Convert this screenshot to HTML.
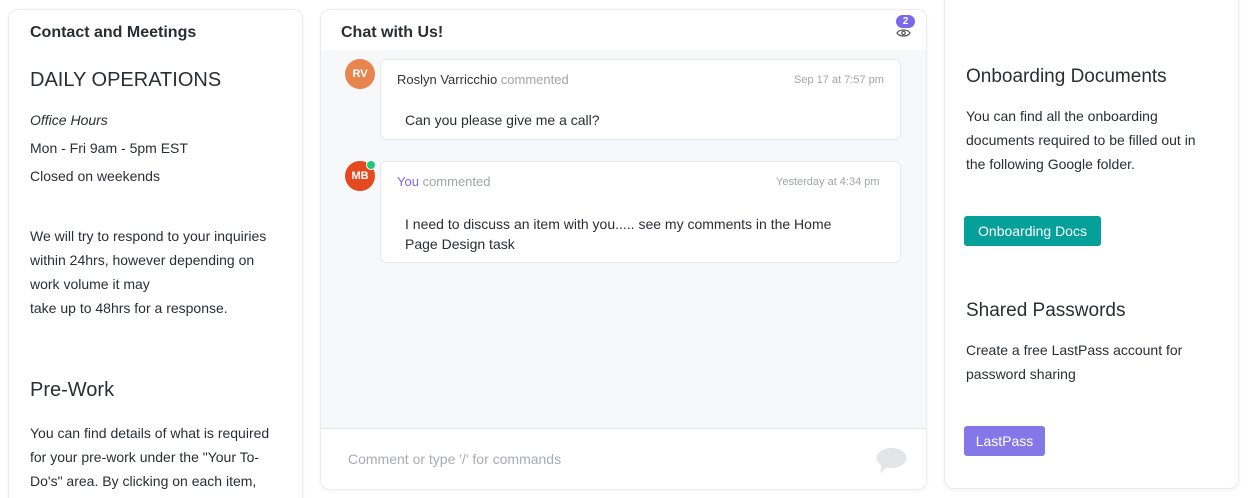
<!DOCTYPE html>
<html><head><meta charset="utf-8"><style>
*{box-sizing:border-box;margin:0;padding:0}
html,body{width:1249px;height:498px;overflow:hidden}
body{background:#fff;font-family:"Liberation Sans",sans-serif;color:#2a2e34;position:relative}
.card{position:absolute;background:#fff;border:1px solid #ececee;border-radius:10px;box-shadow:0 1px 4px rgba(0,0,0,.06)}
.a{position:absolute;white-space:nowrap}
.t{font-size:14px;color:#2a2e34}
.btn{position:absolute;color:#fff;font-size:14px;border-radius:3px;text-align:center;line-height:30px}
</style></head><body>
<div class="card" style="left:8px;top:9px;width:295px;height:500px;border-bottom:none;border-radius:10px 10px 0 0"></div>
<div class="a" style="left:30px;top:24px;font-size:16px;font-weight:bold;color:#2a2e34">Contact and Meetings</div>
<div class="a" style="left:30px;top:69px;font-size:20px">DAILY OPERATIONS</div>
<div class="a t" style="left:30px;top:112px;font-style:italic">Office Hours</div>
<div class="a t" style="left:30px;top:140px">Mon - Fri 9am - 5pm EST</div>
<div class="a t" style="left:30px;top:168px">Closed on weekends</div>
<div class="a t" style="left:30px;top:224px;line-height:24px">We will try to respond to your inquiries<br>within 24hrs, however depending on<br>work volume it may</div>
<div class="a t" style="left:30px;top:300px">take up to 48hrs for a response.</div>
<div class="a" style="left:30px;top:379px;font-size:20px">Pre-Work</div>
<div class="a t" style="left:30px;top:421px;line-height:24px">You can find details of what is required<br>for your pre-work under the "Your To-<br>Do's" area. By clicking on each item,<br>you will be taken to the task where</div>

<div class="card" style="left:320px;top:9px;width:607px;height:481px;overflow:hidden">
 <div style="position:absolute;left:0;top:40px;width:607px;height:379px;background:#f7f8fa;border-bottom:1px solid #e4e6ea"></div>
</div>
<div class="a" style="left:341px;top:24px;font-size:16px;font-weight:bold">Chat with Us!</div>
<div class="a" style="left:896px;top:15px;width:19px;height:13px;border-radius:7px;background:#7b68ee;color:#fff;font-size:10px;font-weight:bold;text-align:center;line-height:13px">2</div>
<svg class="a" style="left:896px;top:28px" width="15" height="10" viewBox="0 0 15 10"><path d="M1 5C3.5 1 11.5 1 14 5C11.5 9 3.5 9 1 5Z" fill="none" stroke="#555" stroke-width="1.2"/><circle cx="7.5" cy="5" r="1.7" fill="none" stroke="#555" stroke-width="1.2"/></svg>
<div class="a" style="left:345px;top:59px;width:30px;height:30px;border-radius:50%;background:#e8854f;color:#fff;font-size:11px;font-weight:bold;text-align:center;line-height:30px">RV</div>
<div class="a" style="left:380px;top:59px;width:521px;height:81px;background:#fff;border:1px solid #e6e8ec;border-radius:6px"></div>
<div class="a" style="left:397px;top:72px;font-size:13px;color:#333">Roslyn Varricchio <span style="color:#a0a4aa">commented</span></div>
<div class="a" style="left:794px;top:74px;font-size:11px;color:#a0a4aa">Sep 17 at 7:57 pm</div>
<div class="a t" style="left:405px;top:112px">Can you please give me a call?</div>
<div class="a" style="left:345px;top:161px;width:30px;height:30px;border-radius:50%;background:#e5491f;color:#fff;font-size:11px;font-weight:bold;text-align:center;line-height:30px">MB</div>
<div class="a" style="left:366px;top:160px;width:10px;height:10px;border-radius:50%;background:#1dc77f;border:1.5px solid #fff"></div>
<div class="a" style="left:380px;top:161px;width:521px;height:102px;background:#fff;border:1px solid #e6e8ec;border-radius:6px"></div>
<div class="a" style="left:397px;top:174px;font-size:13px;color:#7b68ee">You <span style="color:#a0a4aa">commented</span></div>
<div class="a" style="left:776px;top:176px;font-size:11px;color:#a0a4aa">Yesterday at 4:34 pm</div>
<div class="a t" style="left:405px;top:214px;line-height:20px">I need to discuss an item with you..... see my comments in the Home<br>Page Design task</div>
<div class="a" style="left:348px;top:451px;font-size:14px;color:#a8abb0">Comment or type '/' for commands</div>
<svg class="a" style="left:876px;top:447px" width="31" height="27" viewBox="0 0 31 27"><ellipse cx="15.5" cy="11" rx="15" ry="10" fill="#e4e5e7"/><path d="M6 17L4 26L13 19Z" fill="#e4e5e7"/></svg>

<div class="card" style="left:944px;top:-20px;width:295px;height:509px"></div>
<div class="a" style="left:966px;top:66px;font-size:19px">Onboarding Documents</div>
<div class="a t" style="left:966px;top:104px;line-height:24px">You can find all the onboarding<br>documents required to be filled out in<br>the following Google folder.</div>
<div class="btn" style="left:964px;top:216px;width:137px;background:#05a09a">Onboarding Docs</div>
<div class="a" style="left:966px;top:300px;font-size:19px">Shared Passwords</div>
<div class="a t" style="left:966px;top:338px;line-height:24px">Create a free LastPass account for<br>password sharing</div>
<div class="btn" style="left:964px;top:426px;width:81px;background:#8478e8">LastPass</div>
</body></html>
